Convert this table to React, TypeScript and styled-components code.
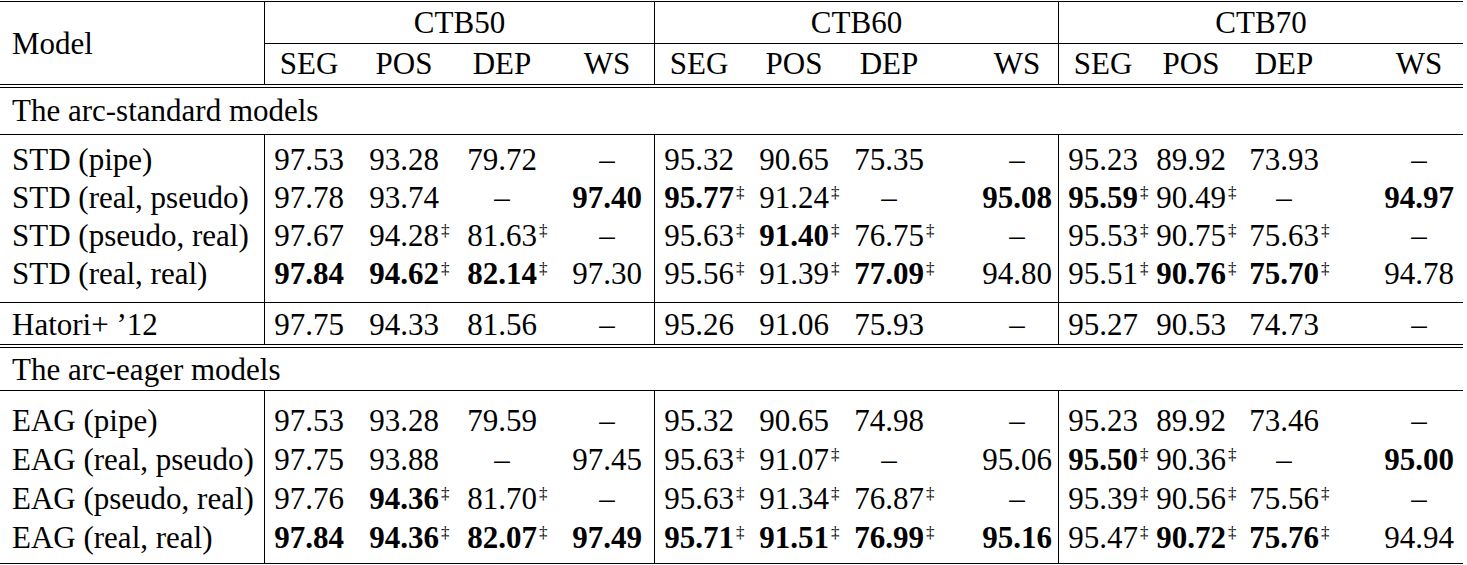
import React from 'react';
import styled, { createGlobalStyle } from 'styled-components';

const SERIF = "'Liberation Serif', 'Times New Roman', serif";

const GlobalStyle = createGlobalStyle`
  html, body { margin: 0; padding: 0; background: #fff; }
  body {
    color: #000;
    font-family: ${SERIF};
  }
`;

const COLS =
  '264px 95px 98px 105px 92px 95px 95px 128px 86px 88px 93px 135px 89px';

const Table = styled.div`
  width: 1463px;
  padding-top: 1px;
  font-family: ${SERIF};
  font-size: 31px;
`;

const Rule = styled.div`
  border-top: 1px solid #000;
`;

const DoubleRule = styled.div`
  height: 2px;
  border-top: 1px solid #000;
  border-bottom: 1px solid #000;
`;

const Header = styled.div`
  display: grid;
  grid-template-columns: ${COLS};
  grid-template-rows: 42px 40px;
`;

const ModelHead = styled.div`
  grid-row: 1 / span 2;
  display: flex;
  align-items: center;
  padding-left: 12px;
  line-height: 1;
`;

const GroupHead = styled.div`
  grid-column: span 4;
  border-left: 1px solid #000;
  border-bottom: 1px solid #000;
  box-sizing: border-box;
  text-align: center;
  line-height: 41px;
`;

const Row = styled.div<{ $h: number }>`
  display: grid;
  grid-template-columns: ${COLS};
  line-height: ${(p) => p.$h}px;
`;

const Body = styled.div<{ $top: number; $bottom: number }>`
  display: flex;
  flex-direction: column;
  & > ${Row}:first-child > * {
    padding-top: ${(p) => p.$top}px;
  }
  & > ${Row}:last-child > * {
    padding-bottom: ${(p) => p.$bottom}px;
  }
`;

const NameCell = styled.div`
  padding-left: 12px;
  white-space: nowrap;
`;

const Cell = styled.div<{ $first?: boolean }>`
  box-sizing: border-box;
  display: flex;
  align-items: flex-start;
  padding-left: ${(p) => (p.$first ? 9 : 10)}px;
  border-left: ${(p) => (p.$first ? '1px solid #000' : 'none')};
`;

const NumBox = styled.div<{ $bold?: boolean }>`
  width: 70px;
  flex-shrink: 0;
  text-align: center;
  white-space: nowrap;
  font-weight: ${(p) => (p.$bold ? 700 : 400)};
`;

const Dagger = styled.span`
  display: inline-block;
  width: 0;
  white-space: nowrap;
  text-indent: 2px;
  font-size: 17px;
  font-weight: 400;
  line-height: 0;
  vertical-align: 10px;
`;

const SectionTitle = styled.div<{ $h: number; $pad: number }>`
  padding-left: 12px;
  padding-top: ${(p) => p.$pad}px;
  line-height: ${(p) => p.$h - p.$pad}px;
  white-space: nowrap;
`;

const SUBS = ['SEG', 'POS', 'DEP', 'WS'];
const GROUPS = ['CTB50', 'CTB60', 'CTB70'];

type RowData = [string, string[]];

const STD: RowData[] = [
  ['STD (pipe)', ['97.53', '93.28', '79.72', '–', '95.32', '90.65', '75.35', '–', '95.23', '89.92', '73.93', '–']],
  ['STD (real, pseudo)', ['97.78', '93.74', '–', '*97.40', '*95.77‡', '91.24‡', '–', '*95.08', '*95.59‡', '90.49‡', '–', '*94.97']],
  ['STD (pseudo, real)', ['97.67', '94.28‡', '81.63‡', '–', '95.63‡', '*91.40‡', '76.75‡', '–', '95.53‡', '90.75‡', '75.63‡', '–']],
  ['STD (real, real)', ['*97.84', '*94.62‡', '*82.14‡', '97.30', '95.56‡', '91.39‡', '*77.09‡', '94.80', '95.51‡', '*90.76‡', '*75.70‡', '94.78']],
];

const HATORI: RowData = [
  'Hatori+ ’12',
  ['97.75', '94.33', '81.56', '–', '95.26', '91.06', '75.93', '–', '95.27', '90.53', '74.73', '–'],
];

const EAG: RowData[] = [
  ['EAG (pipe)', ['97.53', '93.28', '79.59', '–', '95.32', '90.65', '74.98', '–', '95.23', '89.92', '73.46', '–']],
  ['EAG (real, pseudo)', ['97.75', '93.88', '–', '97.45', '95.63‡', '91.07‡', '–', '95.06', '*95.50‡', '90.36‡', '–', '*95.00']],
  ['EAG (pseudo, real)', ['97.76', '*94.36‡', '81.70‡', '–', '95.63‡', '91.34‡', '76.87‡', '–', '95.39‡', '90.56‡', '75.56‡', '–']],
  ['EAG (real, real)', ['*97.84', '*94.36‡', '*82.07‡', '*97.49', '*95.71‡', '*91.51‡', '*76.99‡', '*95.16', '95.47‡', '*90.72‡', '*75.76‡', '94.94']],
];

function Value({ raw }: { raw: string }) {
  const bold = raw.startsWith('*');
  const dag = raw.endsWith('‡');
  const text = raw.replace('*', '').replace('‡', '');
  return (
    <NumBox $bold={bold}>
      {text}
      {dag && <Dagger>‡</Dagger>}
    </NumBox>
  );
}

function DataRow({ data, h }: { data: RowData; h: number }) {
  const [name, vals] = data;
  return (
    <Row $h={h}>
      <NameCell>{name}</NameCell>
      {vals.map((v, i) => (
        <Cell key={i} $first={i % 4 === 0}>
          <Value raw={v} />
        </Cell>
      ))}
    </Row>
  );
}

export default function App() {
  return (
    <>
      <GlobalStyle />
      <Table>
        <Rule />
        <Header>
          <ModelHead>Model</ModelHead>
          {GROUPS.map((g) => (
            <GroupHead key={g}>{g}</GroupHead>
          ))}
          {GROUPS.map((g) =>
            SUBS.map((s, i) => (
              <Cell key={g + s} $first={i === 0} style={{ lineHeight: '40px' }}>
                <NumBox>{s}</NumBox>
              </Cell>
            ))
          )}
        </Header>
        <DoubleRule />
        <SectionTitle $h={46} $pad={0}>The arc-standard models</SectionTitle>
        <Rule />
        <Body $top={6} $bottom={9}>
          {STD.map((r) => (
            <DataRow key={r[0]} data={r} h={38} />
          ))}
        </Body>
        <Rule />
        <Body $top={2} $bottom={0}>
          <DataRow data={HATORI} h={39} />
        </Body>
        <DoubleRule />
        <SectionTitle $h={42} $pad={2}>The arc-eager models</SectionTitle>
        <Rule />
        <Body $top={10} $bottom={6}>
          {EAG.map((r) => (
            <DataRow key={r[0]} data={r} h={39} />
          ))}
        </Body>
        <Rule />
      </Table>
    </>
  );
}
